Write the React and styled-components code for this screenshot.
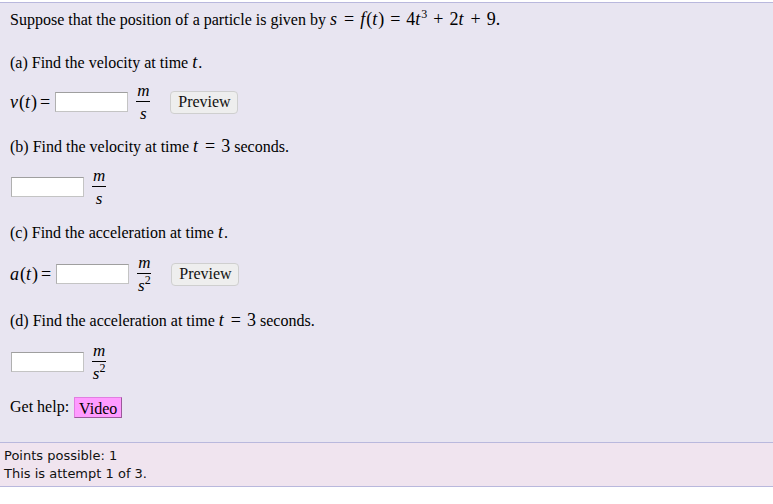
import React from 'react'
import styled, { createGlobalStyle } from 'styled-components'

const GlobalStyle = createGlobalStyle`
    html, body {
        margin: 0;
        padding: 0;
        background: #ffffff;
    }
    body {
        font-family: "Liberation Serif", "Times New Roman", serif;
        color: #000;
    }
`

const Page = styled.div`
    padding-top: 2px;
    width: 773px;
`

const QuestionBox = styled.div`
    background: #e8e5f1;
    border-top: 1px solid #b9b8dd;
    padding: 7px 10px 24px 10px;
    font-size: 16px;
    line-height: 18px;
`

const Para = styled.p`
    margin: ${props => (props.gap === undefined ? 19 : props.gap)}px 0 0 0;
    height: 18px;
    white-space: nowrap;
`

// inline maths, set a little larger like the MathJax output
const Math = styled.span`
    font-family: "Liberation Serif", "Times New Roman", serif;
    font-size: 18px;
`

const V = styled.span`
    font-style: italic;
    padding-right: 1px;
`

const Op = styled.span`
    padding: 0 ${props => (props.tight ? 3 : 6)}px;
`

const Sup = styled.sup`
    font-size: 12px;
    line-height: 0;
    vertical-align: 7px;
    font-style: normal;
`

const AnswerRow = styled.div`
    display: flex;
    align-items: center;
    margin-top: ${props => props.gap || 15}px;
    height: 34px;
`

const Label = styled.span`
    margin-right: 2px;
    white-space: nowrap;
`

const Field = styled.div`
    width: 73px;
    height: 20px;
    box-sizing: border-box;
    background: #fff;
    border: 1px solid #c4c4c4;
    border-top-color: #9f9f9f;
    border-left-color: #b0b0b0;
    ${props => props.indent && 'margin-left: 1px;'}
`

const Fraction = styled.span`
    display: inline-flex;
    flex-direction: column;
    align-items: center;
    margin-left: 8px;
    font-style: italic;
    font-size: 17px;
    line-height: 13px;
`

const Num = styled.span`
    padding: 0 1px 4px 1px;
    border-bottom: 1px solid #000;
`

const Den = styled.span`
    padding-top: 5px;
`

const PreviewButton = styled.button`
    margin-left: 20px;
    height: 23px;
    width: 68px;
    padding: 0;
    font-family: "Liberation Serif", "Times New Roman", serif;
    font-size: 16px;
    color: #111;
    background: #eeeeee;
    border: 1px solid #cfcfcf;
    border-radius: 4px;
`

const HelpRow = styled.div`
    display: flex;
    align-items: center;
    margin-top: 17px;
    height: 22px;
    gap: 5px;
`

const VideoButton = styled.span`
    display: inline-block;
    background: #ff9bff;
    padding: 1px 4px 0 4px;
    height: 21px;
    line-height: 20px;
    box-sizing: border-box;
    border: 1px solid #e17ee1;
    border-right-color: #9a5a9a;
    border-bottom-color: #9a5a9a;
`

const Footer = styled.div`
    background: #f0e4ef;
    border-top: 1px solid #b9b8dd;
    border-bottom: 1px solid #b9b8dd;
    padding: 4px 4px 3px 4px;
    font-family: "DejaVu Sans", Verdana, sans-serif;
    font-size: 13px;
    line-height: 18px;
    color: #111;
`

const Unit = ({ squared }) => (
    <Fraction>
        <Num>m</Num>
        <Den>
            s{squared && <Sup>2</Sup>}
        </Den>
    </Fraction>
)

export default function App() {
    return (
        <Page>
            <GlobalStyle />
            <QuestionBox>
                <Para gap={0}>
                    Suppose that the position of a particle is given by{' '}
                    <Math>
                        <V>s</V>
                        <Op>=</Op>
                        <V>f</V>(<V>t</V>)<Op>=</Op>4<V>t</V>
                        <Sup>3</Sup>
                        <Op>+</Op>2<V>t</V>
                        <Op>+</Op>9.
                    </Math>
                </Para>
                <Para gap={25}>
                    (a) Find the velocity at time <Math><V>t</V></Math>.
                </Para>
                <AnswerRow gap={14}>
                    <Label>
                        <Math>
                            <V>v</V>(<V>t</V>)<Op tight>=</Op>
                        </Math>
                    </Label>
                    <Field />
                    <Unit />
                    <PreviewButton>Preview</PreviewButton>
                </AnswerRow>
                <Para gap={18}>
                    (b) Find the velocity at time{' '}
                    <Math>
                        <V>t</V>
                        <Op>=</Op>3
                    </Math>{' '}
                    seconds.
                </Para>
                <AnswerRow>
                    <Field indent />
                    <Unit />
                </AnswerRow>
                <Para>
                    (c) Find the acceleration at time <Math><V>t</V></Math>.
                </Para>
                <AnswerRow gap={16}>
                    <Label>
                        <Math>
                            <V>a</V>(<V>t</V>)<Op tight>=</Op>
                        </Math>
                    </Label>
                    <Field />
                    <Unit squared />
                    <PreviewButton>Preview</PreviewButton>
                </AnswerRow>
                <Para gap={20}>
                    (d) Find the acceleration at time{' '}
                    <Math>
                        <V>t</V>
                        <Op>=</Op>3
                    </Math>{' '}
                    seconds.
                </Para>
                <AnswerRow gap={16}>
                    <Field indent />
                    <Unit squared />
                </AnswerRow>
                <HelpRow>
                    <span>Get help:</span>
                    <VideoButton>Video</VideoButton>
                </HelpRow>
            </QuestionBox>
            <Footer>
                Points possible: 1
                <br />
                This is attempt 1 of 3.
            </Footer>
        </Page>
    )
}
